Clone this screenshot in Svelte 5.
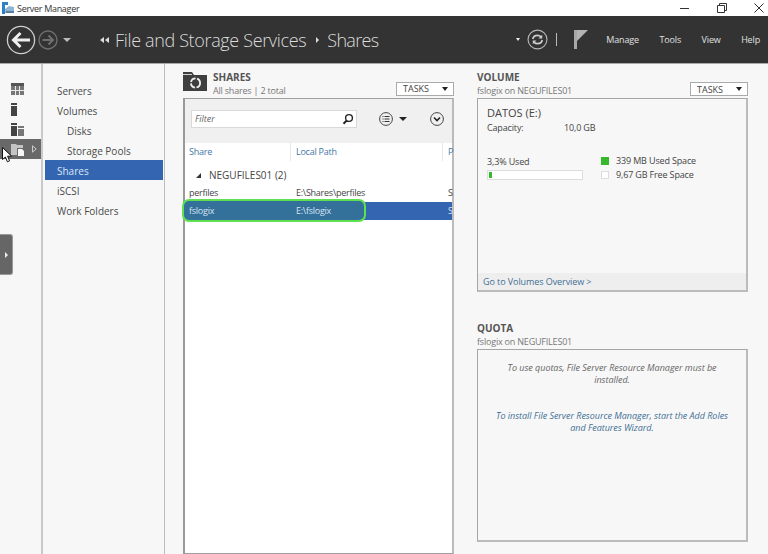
<script>
	const navItems = [
		{ label: 'Servers' },
		{ label: 'Volumes' },
		{ label: 'Disks', sub: true },
		{ label: 'Storage Pools', sub: true },
		{ label: 'Shares', active: true },
		{ label: 'iSCSI' },
		{ label: 'Work Folders' }
	];
	const menus = ['Manage', 'Tools', 'View', 'Help'];
</script>

<div class="window">
	<div class="titlebar">
		<svg class="app-icon" width="12" height="12" viewBox="0 0 12 12">
			<rect x="0" y="0" width="6" height="3" fill="#2f7fc4" />
			<rect x="0" y="3" width="3" height="9" fill="#2f7fc4" />
			<path d="M3 7 L7 4 L12 5 L12 11 L3 11 Z" fill="#8fb4d4" />
			<rect x="4" y="9" width="8" height="2" fill="#5a7f9e" />
		</svg>
		<span class="app-title">Server Manager</span>
		<div class="window-controls">
			<svg width="10" height="10" viewBox="0 0 10 10"><path d="M0 5.5H9" stroke="#333" /></svg>
			<svg width="10" height="10" viewBox="0 0 10 10" fill="none"><path d="M.5 2.5H7.5V9.5H.5Z M2.5 2.5V.5H9.5V7.5H7.5" stroke="#333" /></svg>
			<svg width="10" height="10" viewBox="0 0 10 10"><path d="M.5 .5L9.5 9.5M9.5 .5L.5 9.5" stroke="#333" /></svg>
		</div>
	</div>

	<header class="topbar">
		<svg class="back" width="30" height="30" viewBox="0 0 30 30" fill="none">
			<circle cx="15" cy="15" r="13.6" stroke="#cfcfcf" stroke-width="1.3" />
			<path d="M24 15H8M14.5 8L7.5 15L14.5 22" stroke="#eee" stroke-width="3" />
		</svg>
		<svg class="forward" width="20" height="20" viewBox="0 0 20 20" fill="none">
			<circle cx="10" cy="10" r="9" stroke="#6f6f6f" stroke-width="1.4" />
			<path d="M4.5 10H14.5M10.5 5.5L15 10L10.5 14.5" stroke="#6f6f6f" stroke-width="2" />
		</svg>
		<span class="caret history"></span>
		<svg class="crumb-arrows" width="9" height="6" viewBox="0 0 9 6">
			<path d="M4 0V6L0 3ZM9 0V6L5 3Z" fill="#ddd" />
		</svg>
		<span class="crumb">File and Storage Services</span>
		<span class="crumb-sep"></span>
		<span class="crumb current">Shares</span>
		<div class="top-right">
			<span class="caret small"></span>
			<svg class="refresh" width="21" height="21" viewBox="0 0 20 20" fill="none">
				<circle cx="10" cy="10" r="9" stroke="#b5b5b5" stroke-width="1.1" />
				<path d="M5.5 9.5C6 7 8 6 10 6C11.5 6 12.5 6.6 13.3 7.5M14.5 10.5C14 13 12 14 10 14C8.5 14 7.5 13.4 6.7 12.5" stroke="#ccc" stroke-width="1.6" />
				<path d="M14.5 5.5V9H11Z M5.5 14.5V11H9Z" fill="#ccc" />
			</svg>
			<span class="divider"></span>
			<svg class="flag" width="14" height="20" viewBox="0 0 14 20">
				<rect x="0" y="0" width="3" height="19" fill="#a8a8a8" />
				<path d="M3 0H14L3 11Z" fill="#b4b4b4" />
			</svg>
			<nav class="menus">
				{#each menus as menu}
					<span>{menu}</span>
				{/each}
			</nav>
		</div>
	</header>

	<div class="main">
		<aside class="rail">
			<button class="rail-btn" aria-label="Dashboard">
				<svg width="13" height="12" viewBox="0 0 13 12">
					<rect width="13" height="12" fill="#777" />
					<rect width="13" height="3" fill="#555" />
					<path d="M0 7.5H13M4.5 3V12M8.5 3V12" stroke="#e8e8e8" />
				</svg>
			</button>
			<button class="rail-btn" aria-label="Local Server">
				<svg width="6" height="13" viewBox="0 0 6 13">
					<rect width="6" height="13" fill="#444" />
					<rect y="2" width="6" height="1" fill="#f7f7f7" />
				</svg>
			</button>
			<button class="rail-btn" aria-label="All Servers">
				<svg width="13" height="13" viewBox="0 0 13 13">
					<rect width="6" height="13" fill="#444" />
					<rect x="7" y="3" width="6" height="10" fill="#777" />
					<rect y="2" width="6" height="1" fill="#f7f7f7" />
					<rect x="7" y="5" width="6" height="1" fill="#f7f7f7" />
				</svg>
			</button>
			<button class="rail-btn current" aria-label="File and Storage Services">
				<svg width="14" height="13" viewBox="0 0 14 13">
					<path d="M0 1H5L6 2H12V5H6V12H0Z" fill="#c4c4c4" />
					<path d="M7 6H11L13 8V13H7Z" fill="#f6f6f6" />
				</svg>
				<svg class="rail-arrow" width="5" height="8" viewBox="0 0 5 8" fill="none">
					<path d="M.5 .8L4.2 4L.5 7.2Z" stroke="#ccc" />
				</svg>
			</button>
			<div class="rail-handle"><span></span></div>
		</aside>

		<nav class="sidenav">
			{#each navItems as item}
				<div class="nav-item" class:sub={item.sub} class:active={item.active}>{item.label}</div>
			{/each}
		</nav>

		<section class="content">
			<div class="col shares-col">
				<div class="section-head">
					<svg class="shares-icon" width="24" height="19" viewBox="0 0 24 19">
						<path d="M0 0H9L11 3H24V19H0Z" fill="#3f3f3f" />
						<path d="M0 2.5H9" stroke="#f7f7f7" stroke-width=".8" />
						<circle cx="12.5" cy="11" r="4.6" fill="none" stroke="#f2f2f2" stroke-width="1.8" stroke-dasharray="6 1.6" />
					</svg>
					<div class="head-text">
						<h2>SHARES</h2>
						<p>All shares | 2 total</p>
					</div>
					<div class="tasks">TASKS<span class="caret dark"></span></div>
				</div>
				<div class="shares-panel">
					<div class="toolbar">
						<div class="filter">
							<em>Filter</em>
							<svg width="12" height="12" viewBox="0 0 12 12" fill="none">
								<circle cx="7" cy="5" r="3.4" stroke="#222" stroke-width="1.4" />
								<path d="M4.6 7.6L1.5 10.8" stroke="#222" stroke-width="2" />
							</svg>
						</div>
						<svg class="list-icon" width="14" height="14" viewBox="0 0 14 14" fill="none">
							<circle cx="7" cy="7" r="6.4" stroke="#444" />
							<path d="M5.5 4.5H10.5M5.5 7H10.5M5.5 9.5H10.5M3.5 4.5H4.5M3.5 7H4.5M3.5 9.5H4.5" stroke="#333" />
						</svg>
						<span class="caret dark"></span>
						<svg class="expand" width="14" height="14" viewBox="0 0 14 14" fill="none">
							<circle cx="7" cy="7" r="6.4" stroke="#444" />
							<path d="M4 5.5L7 8.5L10 5.5" stroke="#222" stroke-width="1.6" />
						</svg>
					</div>
					<div class="table">
						<div class="row heads">
							<span class="c1">Share</span>
							<span class="c2">Local Path</span>
							<span class="c3">P</span>
						</div>
						<div class="group"><span class="tri"></span>NEGUFILES01 (2)</div>
						<div class="row">
							<span class="c1">perfiles</span>
							<span class="c2">E:\Shares\perfiles</span>
							<span class="c3">S</span>
						</div>
						<div class="row selected">
							<div class="highlight"></div>
							<span class="c1">fslogix</span>
							<span class="c2">E:\fslogix</span>
							<span class="c3">S</span>
						</div>
					</div>
				</div>
			</div>

			<div class="col">
				<div class="section-head plain">
					<div class="head-text">
						<h2>VOLUME</h2>
						<p>fslogix on NEGUFILES01</p>
					</div>
					<div class="tasks">TASKS<span class="caret dark"></span></div>
				</div>
				<div class="box volume">
					<div class="volume-body">
						<div class="vol-name">DATOS (E:)</div>
						<div class="capacity"><span>Capacity:</span><span>10,0 GB</span></div>
						<div class="usage">
							<div class="used">
								<div>3,3% Used</div>
								<div class="bar"><div class="bar-fill" style="width: 3.3%"></div></div>
							</div>
							<div class="legend">
								<div><i class="swatch green"></i>339 MB Used Space</div>
								<div><i class="swatch"></i>9,67 GB Free Space</div>
							</div>
						</div>
					</div>
					<div class="box-foot">Go to Volumes Overview &gt;</div>
				</div>

				<div class="section-head plain quota-head">
					<div class="head-text">
						<h2>QUOTA</h2>
						<p>fslogix on NEGUFILES01</p>
					</div>
				</div>
				<div class="box quota">
					<p>To use quotas, File Server Resource Manager must be installed.</p>
					<p class="link">To install File Server Resource Manager, start the Add Roles and Features Wizard.</p>
				</div>
			</div>
		</section>
	</div>

	<svg class="cursor" width="11" height="16" viewBox="0 0 11 16">
		<path d="M.5 .5V12.5L3.4 10L5.4 14.8L7.6 13.8L5.6 9.2H9.6Z" fill="#fff" stroke="#111" />
	</svg>
</div>

<style>
	:global(body) {
		margin: 0;
		background: #f7f7f7;
	}

	.window {
		position: relative;
		width: 768px;
		height: 554px;
		overflow: hidden;
		font-family: 'Open Sans', 'Noto Sans', sans-serif;
		font-size: 9.5px;
		color: #444;
		background: #f7f7f7;
	}

	.titlebar {
		display: flex;
		align-items: center;
		height: 16px;
		padding-left: 2px;
		background: #fff;
		color: #333;
	}

	.app-title {
		margin-left: 3px;
		font-size: 9px;
		letter-spacing: -0.3px;
	}

	.window-controls {
		display: flex;
		gap: 27px;
		margin-left: auto;
		padding-right: 4px;
	}

	.topbar {
		display: flex;
		align-items: center;
		height: 47px;
		padding-left: 6px;
		background: #333;
		border-bottom: 1px solid #a8a8a8;
		color: #e4e4e4;
	}

	.forward {
		margin-left: 2px;
	}

	.caret {
		display: inline-block;
		width: 0;
		height: 0;
		border-left: 4px solid transparent;
		border-right: 4px solid transparent;
		border-top: 4px solid #bbb;
	}

	.caret.history {
		margin-left: 5px;
	}

	.caret.small {
		border-left-width: 2.5px;
		border-right-width: 2.5px;
		border-top: 3px solid #eee;
	}

	.caret.dark {
		border-top-color: #222;
	}

	.crumb-arrows {
		margin: 1px 2px 0 29px;
	}

	.crumb {
		margin-left: 4px;
		padding-top: 1px;
		font-size: 18px;
		font-weight: 300;
		letter-spacing: -0.35px;
		color: #dcdcdc;
	}

	.crumb.current {
		margin-left: 3px;
		letter-spacing: -0.7px;
	}

	.crumb-sep {
		width: 0;
		height: 0;
		margin: 0 5px 0 10px;
		border-top: 3px solid transparent;
		border-bottom: 3px solid transparent;
		border-left: 3px solid #ddd;
	}

	.top-right {
		display: flex;
		align-items: center;
		margin-left: auto;
	}

	.refresh {
		margin-left: 7px;
	}

	.divider {
		width: 1px;
		height: 13px;
		margin-left: 8px;
		background: #bbb;
	}

	.flag {
		margin-left: 17px;
	}

	.menus {
		display: flex;
		gap: 20.5px;
		margin-left: 18px;
		padding-right: 8px;
		font-size: 9px;
		font-weight: 500;
		letter-spacing: -0.15px;
		color: #e0e0e0;
	}

	.main {
		display: flex;
		height: 490px;
	}

	.rail {
		position: relative;
		flex: none;
		box-sizing: border-box;
		width: 43px;
		padding-top: 15px;
		border-right: 2px solid #c9c9c9;
	}

	.rail-btn {
		display: flex;
		align-items: center;
		width: 41px;
		height: 20px;
		padding: 0 0 0 11px;
		border: 0;
		background: none;
	}

	.rail-btn.current {
		background: #696969;
	}

	.rail-arrow {
		margin-left: 7px;
	}

	.rail-handle {
		position: absolute;
		top: 170px;
		left: 0;
		display: flex;
		align-items: center;
		justify-content: center;
		box-sizing: border-box;
		width: 13px;
		height: 41px;
		background: #666;
		border: 1px solid #999;
		border-left: 0;
		border-radius: 0 3px 3px 0;
	}

	.rail-handle span {
		width: 0;
		height: 0;
		border-top: 3px solid transparent;
		border-bottom: 3px solid transparent;
		border-left: 3px solid #eee;
	}

	.sidenav {
		flex: none;
		box-sizing: border-box;
		width: 122px;
		padding: 16px 1px 0 2px;
		border-right: 1px solid #bdbdbd;
	}

	.nav-item {
		height: 20px;
		padding-left: 12px;
		line-height: 22px;
		font-size: 10px;
		color: #4a4a4a;
	}

	.nav-item.sub {
		padding-left: 22px;
	}

	.nav-item.active {
		background: #3465b0;
		color: #dbe6f5;
	}

	.content {
		display: flex;
		gap: 23px;
		padding-left: 18px;
	}

	.col {
		display: flex;
		flex-direction: column;
		width: 271px;
	}

	.section-head {
		display: flex;
		align-items: flex-end;
		height: 34px;
	}

	.shares-icon {
		flex: none;
		align-self: flex-start;
		margin: 8px 6px 0 0;
	}

	.head-text {
		padding-bottom: 1px;
	}

	h2 {
		margin: 0;
		font-size: 10px;
		line-height: 13px;
		font-weight: 700;
		color: #555;
	}

	.head-text p {
		margin: 0;
		font-size: 9px;
		line-height: 13px;
		letter-spacing: -0.2px;
		color: #777;
	}

	.tasks {
		display: flex;
		align-items: center;
		justify-content: space-between;
		box-sizing: border-box;
		width: 58px;
		height: 14px;
		margin: 0 0 2px auto;
		padding: 0 5px 0 6px;
		border: 1px solid #aaa;
		background: #fff;
		font-size: 9px;
		color: #444;
	}

	.tasks .caret {
		border-left-width: 3.5px;
		border-right-width: 3.5px;
	}

	.shares-panel {
		box-sizing: border-box;
		height: 460px;
		border: 1px solid #a0a0a0;
		border-right: 2px solid #bbb;
		border-left: 2px solid #999;
		background: #fff;
	}

	.toolbar {
		display: flex;
		align-items: center;
		box-sizing: border-box;
		height: 44px;
		padding: 0 8px 4px 6px;
		background: #f0f0f0;
	}

	.filter {
		display: flex;
		align-items: center;
		justify-content: space-between;
		box-sizing: border-box;
		width: 166px;
		height: 18px;
		padding: 0 2px 0 3px;
		background: #fff;
		border: 1px solid #d9d9d9;
		font-size: 9px;
		color: #666;
	}

	.list-icon {
		margin-left: 22px;
	}

	.toolbar .caret {
		margin-left: 6px;
	}

	.expand {
		margin-left: auto;
	}

	.row {
		position: relative;
		display: flex;
		height: 18px;
		align-items: center;
		color: #444;
		font-size: 9px;
		letter-spacing: -0.25px;
	}

	.row.heads {
		color: #3f77a8;
	}

	.c1,
	.c2,
	.c3 {
		position: relative;
	}

	.c1 {
		flex: none;
		box-sizing: border-box;
		width: 106px;
		padding-left: 4px;
	}

	.c2 {
		flex: none;
		box-sizing: border-box;
		width: 152px;
		padding-left: 5px;
	}

	.heads .c1,
	.heads .c2 {
		height: 100%;
		line-height: 18px;
		border-right: 1px solid #e8e8e8;
	}

	.c3 {
		padding-left: 5px;
	}

	.group {
		display: flex;
		align-items: center;
		box-sizing: border-box;
		height: 23px;
		padding: 6px 0 0 11px;
		font-size: 10px;
		color: #444;
	}

	.tri {
		width: 0;
		height: 0;
		margin-right: 8px;
		border-left: 5px solid transparent;
		border-bottom: 5px solid #333;
	}

	.row.selected {
		background: #3465b0;
		color: #d8e4f2;
	}

	.highlight {
		position: absolute;
		top: -3px;
		left: -3px;
		box-sizing: border-box;
		width: 184px;
		height: 23px;
		border: 2px solid #5fe050;
		border-radius: 7px;
		background: #33709a;
	}

	.box {
		box-sizing: border-box;
		border: 1px solid #a6a6a6;
		border-right: 2px solid #bbb;
		border-bottom: 2px solid #bbb;
	}

	.volume {
		display: flex;
		flex-direction: column;
		height: 194px;
	}

	.volume-body {
		flex: 1;
		padding: 6px 9px;
	}

	.vol-name {
		font-size: 11px;
		line-height: 16px;
		color: #444;
	}

	.capacity {
		display: flex;
		font-size: 9px;
		line-height: 13px;
		letter-spacing: -0.15px;
	}

	.capacity span:first-child {
		width: 77px;
	}

	.usage {
		display: flex;
		margin-top: 21px;
		letter-spacing: -0.15px;
	}

	.used {
		width: 114px;
		line-height: 13px;
		font-size: 9px;
	}

	.bar {
		box-sizing: border-box;
		width: 96px;
		height: 10px;
		margin-top: 2px;
		padding: 1px;
		background: #fff;
		border: 1px solid #ddd;
	}

	.bar-fill {
		height: 100%;
		background: #37b82d;
	}

	.legend {
		margin-top: -1px;
		font-size: 9px;
		line-height: 14px;
	}

	.legend div {
		display: flex;
		align-items: center;
	}

	.swatch {
		box-sizing: border-box;
		width: 8px;
		height: 8px;
		margin-right: 7px;
		background: #fff;
		border: 1px solid #ddd;
	}

	.swatch.green {
		background: #37b82d;
		border-color: #37b82d;
	}

	.box-foot {
		height: 17px;
		padding-left: 5px;
		line-height: 18px;
		background: #eee;
		font-size: 9px;
		letter-spacing: -0.08px;
		color: #3f6f96;
	}

	.quota-head {
		margin-top: 21px;
		height: 36px;
	}

	.quota {
		height: 193px;
		padding: 12px 20px;
		text-align: center;
		font-size: 9px;
		font-style: italic;
		line-height: 12px;
		letter-spacing: -0.03px;
		color: #666;
	}

	.quota p {
		margin: 0 0 24px;
	}

	.quota .link {
		color: #3f6f96;
		margin-left: -4px;
		margin-right: -4px;
	}

	.cursor {
		position: absolute;
		top: 147px;
		left: 2px;
	}
</style>
